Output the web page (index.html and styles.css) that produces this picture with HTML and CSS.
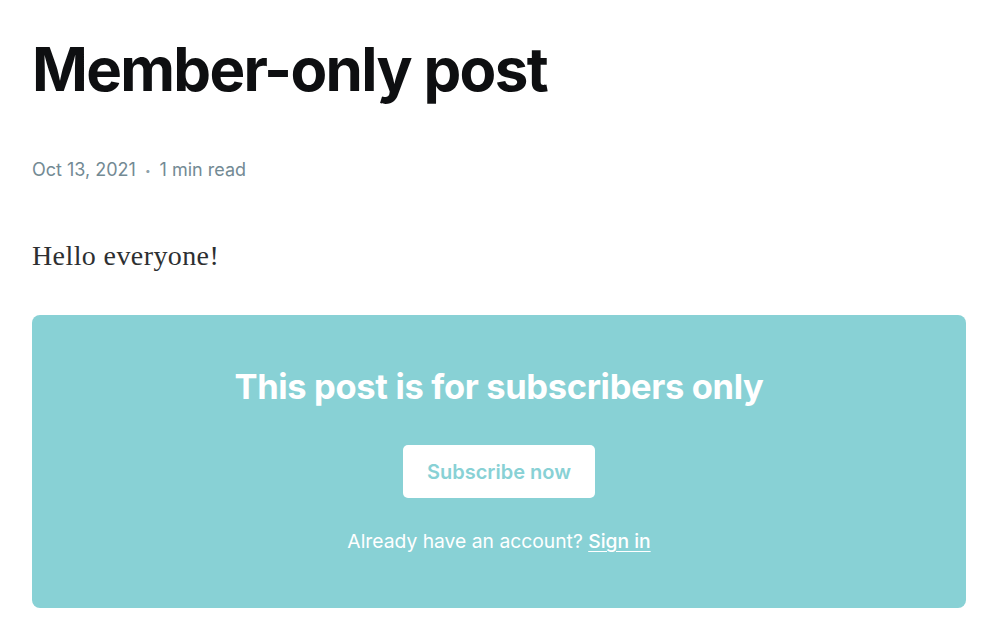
FILE: index.html
```html
<!DOCTYPE html>
<html lang="en">
<head>
<meta charset="utf-8">
<title>Member-only post</title>
<link rel="stylesheet" href="styles.css">
</head>
<body>
<article class="post">
  <header class="post-header">
    <h1 class="post-title">Member-only post</h1>
    <div class="post-meta">
      <time datetime="2021-10-13">Oct 13, 2021</time>
      <span class="bull">•</span>
      <span>1 min read</span>
    </div>
  </header>
  <section class="post-content">
    <p>Hello everyone!</p>
    <aside class="cta">
      <h2 class="cta-title">This post is for subscribers only</h2>
      <a class="cta-button" href="#">Subscribe now</a>
      <p class="cta-signin">Already have an account? <a href="#">Sign in</a></p>
    </aside>
  </section>
</article>
</body>
</html>
```

FILE: styles.css
```css
* { box-sizing: border-box; }

html, body {
  margin: 0;
  padding: 0;
  background: #fff;
}

body {
  font-family: Inter, "Noto Sans", sans-serif;
  color: #15171a;
}

.post {
  padding: 32px 34px 0 32px;
}

.post-title {
  margin: 0;
  font-size: 60px;
  font-weight: 700;
  line-height: 74px;
  letter-spacing: -0.028em;
  color: #0e0f11;
}

.post-meta {
  margin-top: 53px;
  display: flex;
  align-items: center;
  gap: 9px;
  font-size: 18px;
  color: #738a94;
}

.post-meta .bull {
  font-size: 10px;
  opacity: 0.8;
}

.post-content p {
  margin: 0;
}

.post-content > p {
  margin-top: 56px;
  font-family: "Liberation Serif", serif;
  font-size: 28px;
  letter-spacing: 0.4px;
  line-height: 1.4;
  color: #2d2f31;
}

.cta {
  margin-top: 40px;
  height: 293px;
  background: #88d1d5;
  border-radius: 8px;
  display: flex;
  flex-direction: column;
  align-items: center;
  padding-top: 50px;
  color: #fff;
}

.cta-title {
  margin: 0;
  font-size: 34.5px;
  font-weight: 700;
  letter-spacing: -0.01em;
  line-height: 1.3;
}

.cta-button {
  margin-top: 35px;
  width: 192px;
  height: 53px;
  display: flex;
  align-items: center;
  justify-content: center;
  background: #fff;
  border-radius: 5px;
  color: #88d1d5;
  font-size: 20px;
  font-weight: 600;
  text-decoration: none;
}

.cta-signin {
  margin-top: 31px !important;
  font-size: 19.3px;
  line-height: 1.3;
}

.cta-signin a {
  color: #fff;
  font-weight: 500;
  text-decoration: underline;
  text-underline-offset: 3px;
}
```
